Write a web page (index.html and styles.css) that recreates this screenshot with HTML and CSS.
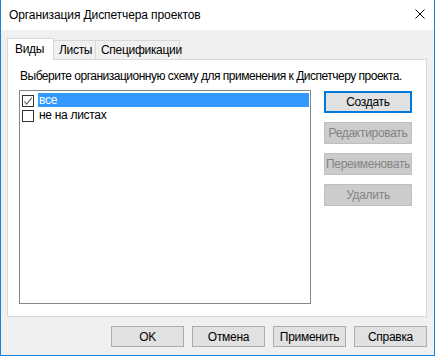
FILE: index.html
```html
<!DOCTYPE html>
<html>
<head>
<meta charset="utf-8">
<link rel="stylesheet" href="styles.css">
</head>
<body>
<div class="window">
  <div class="titlebar">
    <span class="title">Организация Диспетчера проектов</span>
    <span class="close"><svg width="10" height="10" viewBox="0 0 10 10"><path d="M0.5 0.5L9.5 9.5M9.5 0.5L0.5 9.5" stroke="#000" stroke-width="1" fill="none"/></svg></span>
  </div>
  <div class="client">
    <div class="tabs">
      <div class="tab active">Виды</div>
      <div class="tab t2">Листы</div>
      <div class="tab t3">Спецификации</div>
    </div>
    <div class="panel">
      <div class="hint">Выберите организационную схему для применения к Диспетчеру проекта.</div>
      <div class="content">
        <div class="list">
          <div class="item">
            <span class="check checked"><svg width="11" height="11" viewBox="0 0 11 11"><path d="M1.5 5.5L4 8.5L9.5 1.5" stroke="#555" stroke-width="1.2" fill="none"/></svg></span>
            <span class="label selected">все</span>
          </div>
          <div class="item">
            <span class="check"></span>
            <span class="label">не на листах</span>
          </div>
        </div>
        <div class="side">
          <button class="btn default">Создать</button>
          <button class="btn disabled">Редактировать</button>
          <button class="btn disabled">Переименовать</button>
          <button class="btn disabled">Удалить</button>
        </div>
      </div>
    </div>
    <div class="footer">
      <button class="btn foot">OK</button>
      <button class="btn foot">Отмена</button>
      <button class="btn foot">Применить</button>
      <button class="btn foot">Справка</button>
    </div>
  </div>
</div>
</body>
</html>
```

FILE: styles.css
```css
* { box-sizing: border-box; }
html, body { margin: 0; padding: 0; }
body {
  width: 435px;
  height: 356px;
  font-family: "Liberation Sans", Arial, sans-serif;
  font-size: 12px;
  letter-spacing: -0.3px;
  color: #000;
  overflow: hidden;
}
.window {
  width: 435px;
  height: 356px;
  border: 1px solid #1883d7;
  border-top: none;
  background: #f0f0f0;
  display: flex;
  flex-direction: column;
}
.titlebar {
  height: 30px;
  background: #fff;
  display: flex;
  align-items: center;
  justify-content: space-between;
  padding: 0 9px 0 8px;
  flex-shrink: 0;
}
.title { font-size: 12px; letter-spacing: -0.1px; }
.close { display: flex; width: 10px; height: 10px; margin-top: -3px; }
.client {
  display: flex;
  flex-direction: column;
  padding: 8px 7px 0 6px;
}
.tabs {
  display: flex;
  align-items: flex-end;
  height: 21px;
  position: relative;
  z-index: 1;
}
.tab {
  height: 19px;
  padding: 0 0 0 6px;
  border: 1px solid #d9d9d9;
  border-bottom: none;
  background: #f0f0f0;
  line-height: 18px;
  margin-left: -1px;
  white-space: nowrap;
}
.tab.active {
  height: 22px;
  background: #fff;
  margin-left: 0;
  margin-bottom: -1px;
  width: 47px;
  padding-left: 7px;
  line-height: 20px;
}
.tab.t2 { width: 43px; margin-left: -1px; padding-left: 5px; }
.tab.t3 { width: 85px; padding-left: 5px; }
.panel {
  width: 420px;
  height: 258px;
  background: #fff;
  border: 1px solid #d9d9d9;
  padding: 8px 0 0 12px;
}
.hint {
  height: 22px;
  line-height: 16px;
  white-space: nowrap;
  letter-spacing: -0.5px;
}
.content {
  display: flex;
  gap: 13px;
}
.list {
  width: 292px;
  height: 214px;
  border: 1px solid #828790;
  padding: 1px 0 0 2px;
  margin-left: -1px;
}
.item {
  display: flex;
  align-items: flex-end;
  height: 15px;
}
.check {
  width: 12px;
  height: 12px;
  border: 1px solid #333;
  background: #fff;
  margin-right: 4px;
  display: flex;
  align-items: center;
  justify-content: center;
}
.label {
  height: 14px;
  line-height: 14px;
  padding: 0 1px;
}
.label.selected {
  flex: 1;
  background: #3399ff;
  color: #fff;
  margin-right: 1px;
}
.side {
  display: flex;
  flex-direction: column;
  gap: 9px;
  padding-top: 1px;
}
.btn {
  font-family: "Liberation Sans", Arial, sans-serif;
  font-size: 12px;
  letter-spacing: -0.3px;
  background: #e1e1e1;
  border: 1px solid #adadad;
  color: #000;
  padding: 0;
  margin: 0;
  width: 88px;
  height: 22px;
  white-space: nowrap;
}
.btn.default {
  border: 2px solid #0078d7;
}
.btn.disabled {
  background: #cccccc;
  border-color: #bfbfbf;
  color: #838383;
}
.footer {
  display: flex;
  justify-content: flex-end;
  gap: 8px;
  padding-top: 9px;
}
.btn.foot {
  width: 73px;
  height: 21px;
}
```
